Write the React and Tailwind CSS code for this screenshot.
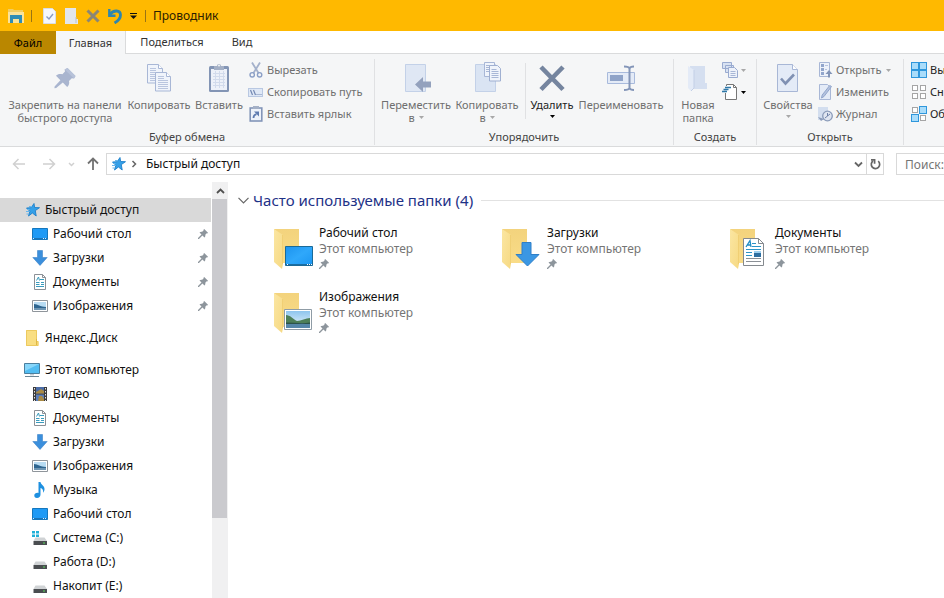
import React, { useState } from "react";

const Pin = ({ className }) => (
  <svg className={className} viewBox="0 0 20 20" fill="currentColor">
    <path d="M12.4 0 L20 7.6 L18.6 9 L17.4 8.6 L14.6 11.6 C15 14 14.6 15.600 13 17 L8.800 13 L2 20 L0 20 L0 18 L7 11.200 L3 7 C4.400 5.400 6 5 8.400 5.400 L11.400 2.600 L11 1.400 Z" />
  </svg>
);

const Caret = ({ className }) => (
  <svg className={className} width="5" height="3" viewBox="0 0 5 3" fill="currentColor">
    <path d="M0 0h5L2.5 3z" />
  </svg>
);

// ---------- ribbon icons ----------
const PinLarge = () => (
  <svg width="32" height="32" viewBox="0 0 32 32">
    <path d="M18.500 6 L26.500 14 L25 16.600 L22.800 16.200 L20 19 C20.600 21.600 20 23.400 18.200 25 L13.800 20.600 L7.200 26 L5.400 26.200 L5.600 24.400 L11.400 18.200 L7 13.800 C8.600 12 10.600 11.600 13.400 12.200 L16 9.600 L15.600 7.400 Z" fill="#a9b5cf" />
    <path d="M18.500 6 L26.500 14 L25 16.600 L15.600 7.400 Z" fill="#b7c2d9" />
  </svg>
);

const Page = ({ x, y }) => (
  <g transform={`translate(${x} ${y})`}>
    <path d="M.5.5h11l4 4v14.5H.5z" fill="#f0f4fb" stroke="#a8b7d6" />
    <path d="M11.5.5v4h4" fill="#fff" stroke="#a8b7d6" />
    <path d="M3 4.5h6M3 6.5h6M3 8.5h10M3 10.5h10M3 12.5h10M3 14.5h10M3 16.5h10" stroke="#b9c5df" />
  </g>
);

const CopyIcon = () => (
  <svg width="32" height="32" viewBox="0 0 32 32">
    <Page x={4} y={2} />
    <Page x={12} y={10} />
  </svg>
);

const PasteIcon = () => (
  <svg width="32" height="32" viewBox="0 0 32 32">
    <rect x="6" y="4" width="20" height="26" rx="1.5" fill="#8395b5" />
    <rect x="8" y="7" width="16" height="21" fill="#edf1f9" />
    <path d="M10 11.5h12M10 14.5h12M10 17.5h12M10 20.5h12M10 23.5h12M12.5 9v17M16.5 9v17M20.5 9v17" stroke="#d2dbec" />
    <path d="M11 4h3a2 2 0 0 1 4 0h3v4H11z" fill="#a4b0c6" />
    <circle cx="16" cy="3.6" r="1" fill="#f5f6f7" />
  </svg>
);

const CutIcon = () => (
  <svg width="16" height="16" viewBox="0 0 16 16" fill="none">
    <path d="M4 .5 L10.5 11M12 .5 L5.5 11" stroke="#a4b1cb" strokeWidth="1.8" />
    <circle cx="4.2" cy="12.8" r="2.2" stroke="#8b9fc6" strokeWidth="1.4" />
    <circle cx="11.6" cy="12.8" r="2.2" stroke="#8b9fc6" strokeWidth="1.4" />
  </svg>
);

const CopyPathIcon = () => (
  <svg width="16" height="16" viewBox="0 0 16 16" fill="none">
    <rect x=".5" y="4.5" width="14" height="8" fill="#dfe8f6" stroke="#b9c8e2" />
    <path d="M2.500 6l2 5M5.500 6l2 5" stroke="#7388b3" strokeWidth="1.200" />
    <path d="M8.5 10.5h1M10.5 10.5h1M12.5 10.5h1" stroke="#7388b3" />
  </svg>
);

const PasteLinkIcon = () => (
  <svg width="16" height="16" viewBox="0 0 16 16" fill="none">
    <rect x="2.200" y="2" width="11.600" height="13" fill="#eef2fa" stroke="#8395b8" strokeWidth="1.600" />
    <path d="M5 0h6v3H5z" fill="#a4b0c6" />
    <path d="M5.500 12c0-2 1-3.400 3-3.800" stroke="#5f7bb0" strokeWidth="1.800" />
    <path d="M6 5.500h5v5z" fill="#5f7bb0" />
  </svg>
);

const MoveToIcon = () => (
  <svg width="32" height="32" viewBox="0 0 32 32">
    <path d="M5 2h20v27H5z" fill="#dfe7f4" />
    <path d="M5.500 2.500h20v27h-20z" fill="none" stroke="#c3d1e8" />
    <path d="M15 22.500l8-7.500v4.600h8v6h-8V30z" fill="#93a1bd" />
  </svg>
);

const CopyToIcon = () => (
  <svg width="32" height="32" viewBox="0 0 32 32">
    <path d="M4.500 2.500h20v27h-20z" fill="#dae4f3" stroke="#c3d1e8" />
    <g transform="translate(13 0)">
      <path d="M.5.5h10v14H.5z" fill="#f0f4fb" stroke="#a8b7d6" />
      <path d="M2 3.5h5M2 5.5h5M2 7.5h5M2 9.5h5" stroke="#a8b7d6" />
      <path d="M5.500 3.500h8l3 3v12.500h-11z" fill="#f0f4fb" stroke="#a0b0d1" />
      <path d="M7.500 7.500h5M7.500 9.500h7M7.500 11.500h7M7.500 13.500h7M7.500 15.500h7" stroke="#a8b7d6" />
    </g>
  </svg>
);

const DeleteIcon = () => (
  <svg width="32" height="32" viewBox="0 0 32 32">
    <path d="M5 5L27 27.500M27 5L5 27.500" stroke="#75859f" strokeWidth="4.600" />
  </svg>
);

const RenameIcon = () => (
  <svg width="32" height="32" viewBox="0 0 32 32" fill="none">
    <path d="M2.500 10.500h27v11h-27z" fill="#e4ebf7" stroke="#a8badc" />
    <path d="M5 13h13v6H5z" fill="#8fa3c8" />
    <path d="M19 4.500c3 0 5 .5 5.500 2 .5-1.500 2.500-2 4.500-2M24.500 6v20M19 28c3 0 5-.5 5.500-2 .5 1.500 2.500 2 4.500 2" stroke="#8395b8" strokeWidth="2" />
  </svg>
);

const NewFolderIcon = () => (
  <svg width="32" height="32" viewBox="0 0 32 32">
    <path d="M8 4h15v17h2v6H8z" fill="#d5dff0" />
    <path d="M6 4l6 4v18l-3 3-3-3z" fill="#e4ebf7" />
    <path d="M12 8v18l-3 3" stroke="#c3cfe6" fill="none" />
  </svg>
);

const NewItemIcon = () => (
  <svg width="16" height="16" viewBox="0 0 16 16">
    <path d="M.500.500h9v6h-9zM3.500 3.500h8v7h-8z" fill="#d8e2f2" stroke="#9aabd0" />
    <path d="M6.500 5.500h6l3 3v7h-9z" fill="#eef2fa" stroke="#9aabd0" />
    <path d="M8.500 9.500h5M8.500 11.500h5M8.500 13.500h5" stroke="#a8b7d6" />
  </svg>
);

const EasyAccessIcon = () => (
  <svg width="16" height="16" viewBox="0 0 16 16" fill="none">
    <path d="M4.500 2V.500h7l3 3v12h-11V9" fill="#fff" stroke="#777" />
    <path d="M11.500.500v3h3" stroke="#777" />
    <path d="M3 3.500h6M1.500 5.500h5M0 7.500h5" stroke="#2f78a8" strokeWidth="1.300" />
  </svg>
);

const PropertiesIcon = () => (
  <svg width="32" height="32" viewBox="0 0 32 32" fill="none">
    <path d="M5.500 2.500h15l5 5v22h-20z" fill="#e4ebf7" stroke="#a8b7d6" />
    <path d="M20.500 2.500v5h5" fill="#fff" stroke="#a8b7d6" />
    <path d="M9 16.500l4.500 5L22 12.500" stroke="#8091b3" strokeWidth="2.600" />
  </svg>
);

const OpenIcon = () => (
  <svg width="16" height="16" viewBox="0 0 16 16">
    <path d="M2.500.500h10v14h-10z" fill="#eef2fa" stroke="#a8b7d6" />
    <path d="M4 2h3v3H4zM4 6h3v3H4zM4 10h3v3H4z" fill="#92a6cc" />
    <path d="M8 3.500h3M8 7.500h2" stroke="#b9c5df" />
    <path d="M12 8l3.500 4H13v3.500h-2V12H8.500z" fill="#8395b8" />
  </svg>
);

const EditIcon = () => (
  <svg width="16" height="16" viewBox="0 0 16 16">
    <path d="M2.500.500h8l3 3v12h-11z" fill="#e4ebf7" stroke="#a8b7d6" />
    <path d="M14.500 2.500l-7.500 10-2.500 1.500.700-3 7.500-9.500z" fill="#b4c2de" stroke="#92a6cc" />
  </svg>
);

const HistoryIcon = () => (
  <svg width="16" height="16" viewBox="0 0 16 16" fill="none">
    <path d="M1 1h10v13H1z" fill="#d3deef" />
    <circle cx="10.500" cy="10" r="4.800" fill="#dfe5f0" stroke="#8b9bb9" strokeWidth="1.300" />
    <path d="M8 12l2.500-2V7M10.500 10l2.500-2" stroke="#6f82a8" />
    <path d="M1 11l3 4 3-2z" fill="#8b9bb9" />
  </svg>
);

const SelectGrid = ({ cells }) => (
  <svg width="16" height="16" viewBox="0 0 16 16">
    {cells.map((on, i) => (
      <rect
        key={i}
        x={(i % 2) * 8 + 0.5 + (on ? 0 : 1)}
        y={Math.floor(i / 2) * 8 + 0.5 + (on ? 0 : 1)}
        width={on ? 7 : 5}
        height={on ? 7 : 5}
        fill={on ? "#a9dcfa" : "#fff"}
        stroke={on ? "#2f97dc" : "#a5a5a5"}
      />
    ))}
  </svg>
);

// ---------- navigation icons ----------
const StarIcon = () => (
  <svg width="16" height="16" viewBox="0 0 16 16">
    <path d="M10 1.500l.6 4 4.900.200-4.200 2.900.900 5.400-3.800-3L4.500 14l1.300-4.700L2.500 6l4.700-.300z" fill="#35a0e8" stroke="#1d7fc9" strokeWidth=".9" />
    <path d="M5 4.500h3M3 7.500h2.500M2 9.500h3.500M2.500 12h2" stroke="#67b7ee" />
  </svg>
);

const DesktopIcon = () => (
  <svg width="16" height="16" viewBox="0 0 16 16">
    <path d="M.500 2.500h15v11H.500z" fill="#1f9af5" stroke="#1577bd" />
    <path d="M1 12.500h14" stroke="#1a74b8" />
    <path d="M1 12.500h1M11 12.500h1M13 12.500h1" stroke="#d7efff" />
  </svg>
);

const DownloadIcon = () => (
  <svg width="16" height="16" viewBox="0 0 16 16">
    <path d="M5.500.500h5v7h4.700L8 15.500.800 7.500h4.700z" fill="#3b8fdc" stroke="#2d77c0" strokeWidth=".5" />
  </svg>
);

const DocumentIcon = () => (
  <svg width="16" height="16" viewBox="0 0 16 16" fill="none">
    <path d="M2.500.500h8l3 3v12h-11z" fill="#fff" stroke="#8b9096" />
    <path d="M10.500.500v3h3" stroke="#8b9096" />
    <path d="M4.500 6.500L6.500 3l1 3.500M8 5.500h4M4 8.500h3.500M9 8.500h3M4 10.500h3.500M9 10.500h3M4 12.500h8" stroke="#3a9bbd" />
  </svg>
);

const PictureIcon = () => (
  <svg width="16" height="16" viewBox="0 0 16 16">
    <path d="M.500 2.500h15v11H.500z" fill="#fff" stroke="#8f959b" />
    <path d="M2 4h12v8H2z" fill="#b8dcf3" />
    <path d="M2 6c4 0 6 3 12 3v3H2z" fill="#2e6590" />
    <path d="M2 10h12v2H2z" fill="#6d95b3" />
  </svg>
);

const FolderIcon = () => (
  <svg width="16" height="16" viewBox="0 0 16 16">
    <path d="M2 0h11v11h1.500v5H2z" fill="#f9de82" />
    <path d="M2.500.500h10v11h1.500v4H2.500z" fill="none" stroke="#ecc95f" />
    <path d="M12.500 9v6" stroke="#dfb947" />
  </svg>
);

const ComputerIcon = () => (
  <svg width="16" height="16" viewBox="0 0 16 16">
    <path d="M.500 1.500h15v10H.500z" fill="#52bdf2" stroke="#4b7f9e" />
    <path d="M1 2h14L1 9z" fill="#87d6fa" />
    <path d="M6 12h4v1.500H6z" fill="#c3cdd4" />
    <path d="M1 14.500h14" stroke="#6e8795" />
  </svg>
);

const VideoIcon = () => (
  <svg width="16" height="16" viewBox="0 0 16 16">
    <path d="M1 1h14v14H1z" fill="#3b3a3a" />
    <path d="M4 1h8v6.500H4z" fill="#4b6ca6" />
    <path d="M4 8.500h8V15H4z" fill="#5b7ebb" />
    <path d="M6 5l3-2 3 2v2.500H4V6zM7 10h3l2 3v2H6z" fill="#a98a44" />
    <path d="M2.500 2v13M13.500 2v13" stroke="#e6e6e6" strokeDasharray="1.500 1.500" />
  </svg>
);

const MusicIcon = () => (
  <svg width="16" height="16" viewBox="0 0 16 16">
    <path d="M6.500 0h2c.300 3 4 3.500 4 7 0 1.600-.600 2.800-1.400 3.800.400-3-.800-4.300-2.600-4.800v6.500c0 2-1.500 3.500-3.500 3.500S2.300 15 2.300 13.500c0-1.900 2-3 4.200-2.600z" fill="#1e90e0" />
  </svg>
);

const DriveIcon = ({ system }) => (
  <svg width="16" height="16" viewBox="0 0 16 16">
    <path d="M3.500 7.500h9L15 11H1.500z" fill="#d0d3d5" />
    <path d="M1.500 11H15v4H1.500z" fill="#4a4d50" />
    <path d="M11 13h2" stroke="#57d95a" />
    {system && <path d="M0 1h3v2.500H0zM4 1h3v2.500H4zM0 4.500h3V7H0zM4 4.500h3V7H4z" fill="#21b0d8" />}
  </svg>
);

// ---------- big folder with an overlay ----------
const FolderLarge = ({ children }) => (
  <svg className="shrink-0" width="40" height="48" viewBox="0 0 40 48">
    <defs>
      <linearGradient id="flap" x1="0" y1="0" x2="1" y2="1">
        <stop offset="0" stopColor="#fbe6a2" />
        <stop offset="1" stopColor="#f6d983" />
      </linearGradient>
      <linearGradient id="back" x1="0" y1="0" x2="0" y2="1">
        <stop offset="0" stopColor="#f3d37d" />
        <stop offset="1" stopColor="#f9dc88" />
      </linearGradient>
      <linearGradient id="screen" x1="0" y1="0" x2="1" y2="1">
        <stop offset="0" stopColor="#1c93ee" />
        <stop offset=".5" stopColor="#2fa8fb" />
        <stop offset="1" stopColor="#1b96f2" />
      </linearGradient>
      <linearGradient id="sky" x1="0" y1="0" x2="0" y2="1">
        <stop offset="0" stopColor="#8ec5ee" />
        <stop offset="1" stopColor="#eaf5fb" />
      </linearGradient>
    </defs>
    <path d="M1 6h25v34H10z" fill="url(#back)" />
    <path d="M1 6l9 6v29l-1 5L1 39z" fill="url(#flap)" />
    <path d="M9.500 12v29" stroke="#f0cf74" />
    {children}
  </svg>
);

const overlays = {
  desktop: (
    <g>
      <path d="M12.500 23.500h27v19h-27z" fill="url(#screen)" stroke="#1b6a98" />
      <path d="M13 41.500h26" stroke="#1a6da3" />
      <path d="M14 41.500h1M34 41.500h1M36 41.500h1M38 41.500h1" stroke="#fff" />
    </g>
  ),
  downloads: <path d="M21 19.500h9v12h8L26.500 43 15 31.500h6z" fill="#3b97e3" stroke="#2f7fc8" />,
  documents: (
    <g fill="none">
      <path d="M14.500 15.500h15l5 5v22h-20z" fill="#fff" stroke="#84898e" />
      <path d="M29.500 15.500v5h5" stroke="#84898e" />
      <path d="M17 24l4-6.500 1 6.500M18.500 22h3.500" stroke="#1f8bc4" strokeWidth="1.300" />
      <path d="M23 20.500h4M23 23.500h9M17 26.500h15M17 29.500h6M17 32.500h6" stroke="#2d94c7" />
      <path d="M25 28h7v6h-7z" fill="#2f6fa1" />
      <path d="M25 28h7v2h-7z" fill="#9fd0ee" />
      <path d="M17 35.500h15M17 38.500h15" stroke="#8b9096" />
    </g>
  ),
  pictures: (
    <g>
      <path d="M11.500 22.500h27v20h-27z" fill="#fff" stroke="#8f9ca6" />
      <path d="M13 24h24v17H13z" fill="url(#sky)" />
      <path d="M13 28c4 0 7 4 11 6 4 0 9-3 13-3v6H13z" fill="#4d7f58" />
      <path d="M13 36h24v5H13z" fill="#5586a8" />
      <path d="M13 35.500c8 0 16 1.500 24 0v1.500H13z" fill="#2b5348" />
    </g>
  ),
};

const quickAccess = [
  { label: "Рабочий стол", icon: DesktopIcon },
  { label: "Загрузки", icon: DownloadIcon },
  { label: "Документы", icon: DocumentIcon },
  { label: "Изображения", icon: PictureIcon },
];

const computer = [
  { label: "Видео", icon: VideoIcon },
  { label: "Документы", icon: DocumentIcon },
  { label: "Загрузки", icon: DownloadIcon },
  { label: "Изображения", icon: PictureIcon },
  { label: "Музыка", icon: MusicIcon },
  { label: "Рабочий стол", icon: DesktopIcon },
  { label: "Система (C:)", icon: DriveIcon, system: true },
  { label: "Работа (D:)", icon: DriveIcon },
  { label: "Накопит (E:)", icon: DriveIcon },
];

const folders = [
  { label: "Рабочий стол", overlay: "desktop" },
  { label: "Загрузки", overlay: "downloads" },
  { label: "Документы", overlay: "documents" },
  { label: "Изображения", overlay: "pictures" },
];

function RibbonGroup({ title, className, children }) {
  return (
    <section className={`flex shrink-0 flex-col border-r border-[#e0e1e3] ${className}`}>
      <div className="flex flex-1 items-start">{children}</div>
      <h2 className="text-center leading-4 text-[#444]">{title}</h2>
    </section>
  );
}

function BigButton({ icon: Icon, lines, caret, active, className }) {
  return (
    <button
      className={`mt-[3px] flex shrink-0 flex-col items-center whitespace-nowrap leading-[13px] ${
        active ? "text-[#222]" : "text-[#6f6f6f]"
      } ${className}`}
    >
      <Icon />
      <span className="mt-1">{lines[0]}</span>
      {lines[1] ? (
        <span className="flex items-center gap-1">
          {lines[1]}
          {caret && <Caret className="text-[#a8a8a8]" />}
        </span>
      ) : (
        caret && <Caret className={active ? "mt-1 text-black" : "mt-1 text-[#a8a8a8]"} />
      )}
    </button>
  );
}

function SmallButton({ icon: Icon, label, caret, active, children }) {
  return (
    <button
      className={`flex h-[22px] items-center gap-[3px] whitespace-nowrap ${
        active ? "text-[#222]" : "text-[#6f6f6f]"
      }`}
    >
      {children || <Icon />}
      {label}
      {caret && <Caret className="ml-[2px] text-[#a8a8a8]" />}
    </button>
  );
}

function NavItem({ icon: Icon, label, system, level, pinned, selected, onSelect }) {
  return (
    <li>
      <button
        onClick={onSelect}
        className={`flex h-6 w-full items-center gap-[5px] pr-[3px] text-left ${
          level === 1 ? "pl-6" : "pl-8"
        } ${selected ? "bg-[#d9d9d9]" : ""}`}
      >
        <Icon system={system} />
        <span className="flex-1">{label}</span>
        {pinned && <Pin className="h-[10px] w-[10px] text-[#8d959c]" />}
      </button>
    </li>
  );
}

function App() {
  const [tab, setTab] = useState("Главная");
  const [current, setCurrent] = useState("Быстрый доступ");
  const [open, setOpen] = useState(true);

  return (
    <div className="flex min-h-screen flex-col overflow-hidden bg-white font-['Noto_Sans','Open_Sans',sans-serif] text-xs text-[#111]">
      {/* Title bar */}
      <header className="flex h-[31px] items-center bg-[#ffb900] pl-2">
        <svg width="16" height="16" viewBox="0 0 16 16">
          <path d="M0 1h5l1 1h9v4H0z" fill="#f2ce62" />
          <path d="M0 4h16v11H0z" fill="#fbe39a" />
          <path d="M2 7h12v8h-3v-4H5v4H2z" fill="#2f8db5" />
        </svg>
        <span className="ml-[7px] h-3 w-px bg-[#9a7414]" />
        <button className="ml-[11px]" aria-label="Свойства">
          <svg width="13" height="16" viewBox="0 0 13 16" fill="none">
            <path d="M.500.500h9l3 3v12H.500z" fill="#f5f7fb" stroke="#d9dde6" />
            <path d="M3.500 8.500l2.500 2.500 4-5" stroke="#8b9bc0" strokeWidth="1.400" />
          </svg>
        </button>
        <button className="ml-[9px]" aria-label="Новая папка">
          <svg width="13" height="16" viewBox="0 0 13 16">
            <path d="M0 0h11v11h2v5H0z" fill="#e2e6ec" />
            <path d="M11 9v6" stroke="#b9c2cc" />
          </svg>
        </button>
        <button className="ml-2" aria-label="Удалить">
          <svg width="14" height="14" viewBox="0 0 14 14">
            <path d="M1.500 1.500l11 11M12.500 1.500l-11 11" stroke="#8b8674" strokeWidth="3" />
          </svg>
        </button>
        <button className="ml-2" aria-label="Отменить">
          <svg width="14" height="16" viewBox="0 0 14 16" fill="none">
            <path d="M2 6.500C5.500 1.500 12.500 2 12.500 7c0 3.500-2.500 6-6 8" stroke="#2d86ae" strokeWidth="2.800" />
            <path d="M1.300 1v6.700h6.200" stroke="#2d86ae" strokeWidth="2.400" />
          </svg>
        </button>
        <button className="ml-2" aria-label="Настройка панели">
          <svg width="7" height="6" viewBox="0 0 7 6">
            <path d="M0 .500h7" stroke="#111" />
            <path d="M0 2.500h7L3.500 6z" fill="#111" />
          </svg>
        </button>
        <span className="ml-2 h-3 w-px bg-[#9a7414]" />
        <h1 className="ml-[7px] text-[#2b2000]">Проводник</h1>
      </header>

      {/* Tabs */}
      <nav className="flex h-[23px] text-[11px] text-[#333]">
        <button className="w-14 bg-[#ba8700] pt-px text-black">Файл</button>
        {[
          ["Главная", "w-[70px]"],
          ["Поделиться", "w-[92px]"],
          ["Вид", "w-12"],
        ].map(([name, width]) => (
          <button
            key={name}
            onClick={() => setTab(name)}
            className={`${width} pt-px ${
              tab === name
                ? "border-r border-[#dadbdc] bg-[#f5f6f7]"
                : "border-b border-[#dadbdc]"
            }`}
          >
            {name}
          </button>
        ))}
        <span className="flex-1 border-b border-[#dadbdc]" />
      </nav>

      {/* Ribbon */}
      <div className="flex h-[93px] overflow-hidden border-b border-[#dadbdc] bg-[#f5f6f7] pb-px pt-[5px] text-[11px]">
        <RibbonGroup title="Буфер обмена" className="w-[375px]">
          <BigButton
            icon={PinLarge}
            lines={["Закрепить на панели", "быстрого доступа"]}
            className="ml-1 w-[122px]"
          />
          <BigButton icon={CopyIcon} lines={["Копировать"]} className="w-[66px]" />
          <BigButton icon={PasteIcon} lines={["Вставить"]} className="w-[54px]" />
          <div className="ml-[2px] flex flex-col">
            <SmallButton icon={CutIcon} label="Вырезать" />
            <SmallButton icon={CopyPathIcon} label="Скопировать путь" />
            <SmallButton icon={PasteLinkIcon} label="Вставить ярлык" />
          </div>
        </RibbonGroup>

        <RibbonGroup title="Упорядочить" className="w-[299px]">
          <BigButton icon={MoveToIcon} lines={["Переместить", "в"]} caret className="ml-1 w-[74px]" />
          <BigButton icon={CopyToIcon} lines={["Копировать", "в"]} caret className="w-[68px]" />
          <span className="mx-1 mt-1 h-14 w-px bg-[#e0e1e3]" />
          <BigButton icon={DeleteIcon} lines={["Удалить"]} caret active className="w-11" />
          <BigButton icon={RenameIcon} lines={["Переименовать"]} className="w-[94px]" />
        </RibbonGroup>

        <RibbonGroup title="Создать" className="w-[83px]">
          <BigButton icon={NewFolderIcon} lines={["Новая", "папка"]} className="ml-1 w-10" />
          <div className="ml-1 flex flex-col">
            <button className="flex h-[22px] items-center gap-[3px] text-[#a8a8a8]" aria-label="Создать элемент">
              <NewItemIcon />
              <Caret />
            </button>
            <button className="flex h-[22px] items-center gap-[3px] text-black" aria-label="Простой доступ">
              <EasyAccessIcon />
              <Caret />
            </button>
          </div>
        </RibbonGroup>

        <RibbonGroup title="Открыть" className="w-[147px]">
          <BigButton icon={PropertiesIcon} lines={["Свойства"]} caret className="ml-1 w-[54px]" />
          <div className="ml-[2px] flex flex-col">
            <SmallButton icon={OpenIcon} label="Открыть" caret />
            <SmallButton icon={EditIcon} label="Изменить" />
            <SmallButton icon={HistoryIcon} label="Журнал" />
          </div>
        </RibbonGroup>

        <div className="flex flex-1 flex-col pl-[7px]">
          <SmallButton label="Вы" active>
            <SelectGrid cells={[1, 1, 1, 1]} />
          </SmallButton>
          <SmallButton label="Сн" active>
            <SelectGrid cells={[0, 0, 0, 0]} />
          </SmallButton>
          <SmallButton label="Об" active>
            <SelectGrid cells={[0, 1, 1, 0]} />
          </SmallButton>
        </div>
      </div>

      {/* Address bar */}
      <div className="flex h-[35px] items-center pb-px pl-3">
        <button aria-label="Назад">
          <svg width="14" height="12" viewBox="0 0 14 12" fill="none" stroke="#d0d0d0" strokeWidth="1.500">
            <path d="M13 6H2M6.500 1L1.500 6l5 5" />
          </svg>
        </button>
        <button className="ml-4" aria-label="Вперёд">
          <svg width="14" height="12" viewBox="0 0 14 12" fill="none" stroke="#d0d0d0" strokeWidth="1.500">
            <path d="M1 6h11M7.500 1l5 5-5 5" />
          </svg>
        </button>
        <button className="ml-3" aria-label="Последние расположения">
          <svg width="7" height="5" viewBox="0 0 7 5" fill="none" stroke="#d0d0d0" strokeWidth="1.500">
            <path d="M1 1l2.500 2.500L6 1" />
          </svg>
        </button>
        <button className="ml-3" aria-label="Вверх">
          <svg width="12" height="14" viewBox="0 0 12 14" fill="none" stroke="#727272" strokeWidth="1.800">
            <path d="M6 13V2M1 6.500l5-5 5 5" />
          </svg>
        </button>
        <div className="ml-[7px] flex h-[22px] flex-1 items-center border border-[#d9d9d9] pl-[3px]">
          <StarIcon />
          <svg className="ml-1" width="8" height="8" viewBox="0 0 8 8" fill="none" stroke="#666" strokeWidth="1.500">
            <path d="M2.500 1l3 3-3 3" />
          </svg>
          <button className="ml-2">{current}</button>
          <button className="ml-auto mr-[3px]" aria-label="Журнал адресов">
            <svg width="9" height="7" viewBox="0 0 9 7" fill="none" stroke="#666" strokeWidth="1.800">
              <path d="M1 1.500l3.500 3.500L8 1.500" />
            </svg>
          </button>
          <button className="flex h-full w-[17px] items-center justify-center border-l border-[#d9d9d9]" aria-label="Обновить">
            <svg width="11" height="12" viewBox="0 0 11 12" fill="none" stroke="#666" strokeWidth="1.700">
              <path d="M8.200 3.200a4.200 4.200 0 1 1-5.200-.200" />
              <path d="M1 1.800h3.600v4" />
            </svg>
          </button>
        </div>
        <input
          type="text"
          aria-label="Поиск"
          placeholder="Поиск:"
          className="ml-3 h-[22px] w-12 border-y border-l border-[#d9d9d9] pl-2 outline-none placeholder:text-[#757575]"
        />
      </div>

      <div className="flex flex-1">
        {/* Navigation pane */}
        <aside className="flex w-[228px] shrink-0">
          <nav className="flex-1 pt-4">
            <ul>
              <NavItem
                icon={StarIcon}
                label="Быстрый доступ"
                level={1}
                selected={current === "Быстрый доступ"}
                onSelect={() => setCurrent("Быстрый доступ")}
              />
              {quickAccess.map((item) => (
                <NavItem key={item.label} {...item} level={2} pinned />
              ))}
            </ul>
            <ul className="mt-2">
              <NavItem icon={FolderIcon} label="Яндекс.Диск" level={1} />
            </ul>
            <ul className="mt-2">
              <NavItem icon={ComputerIcon} label="Этот компьютер" level={1} />
              {computer.map((item) => (
                <NavItem key={item.label} {...item} level={2} />
              ))}
            </ul>
          </nav>
          <div className="ml-px flex w-4 flex-col bg-[#f0f0f1]">
            <button className="flex h-[17px] items-center justify-center" aria-label="Прокрутить вверх">
              <svg width="9" height="6" viewBox="0 0 9 6" fill="none" stroke="#505050" strokeWidth="1.800">
                <path d="M1 5l3.500-3.500L8 5" />
              </svg>
            </button>
            <div className="mr-px h-[319px] bg-[#cacace]" />
          </div>
        </aside>

        {/* Folder view */}
        <main className="min-w-0 flex-1 pl-[10px] pt-[7px]">
          <div className="flex items-center">
            <button onClick={() => setOpen(!open)} className="flex items-center gap-1 text-[#1e3287]">
              <svg width="11" height="7" viewBox="0 0 11 7" fill="none" stroke="#666" strokeWidth="1.200">
                <path d="M.500.800l5 5 5-5" />
              </svg>
              <span className="text-[15px] leading-[22px]">Часто используемые папки (4)</span>
            </button>
            <span className="ml-2 h-px flex-1 bg-[#e2e2e2]" />
          </div>
          {open && (
            <div className="mt-3 grid grid-cols-[repeat(auto-fill,200px)] gap-x-7 pl-[35px]">
              {folders.map((f) => (
                <button key={f.label} className="flex h-16 items-start text-left leading-4">
                  <FolderLarge>{overlays[f.overlay]}</FolderLarge>
                  <span className="ml-[6px] flex flex-col pt-[2px]">
                    <span>{f.label}</span>
                    <span className="text-[#757575]">Этот компьютер</span>
                    <Pin className="mt-[2px] h-[10px] w-[10px] text-[#8d959c]" />
                  </span>
                </button>
              ))}
            </div>
          )}
        </main>
      </div>
    </div>
  );
}

export default App;
